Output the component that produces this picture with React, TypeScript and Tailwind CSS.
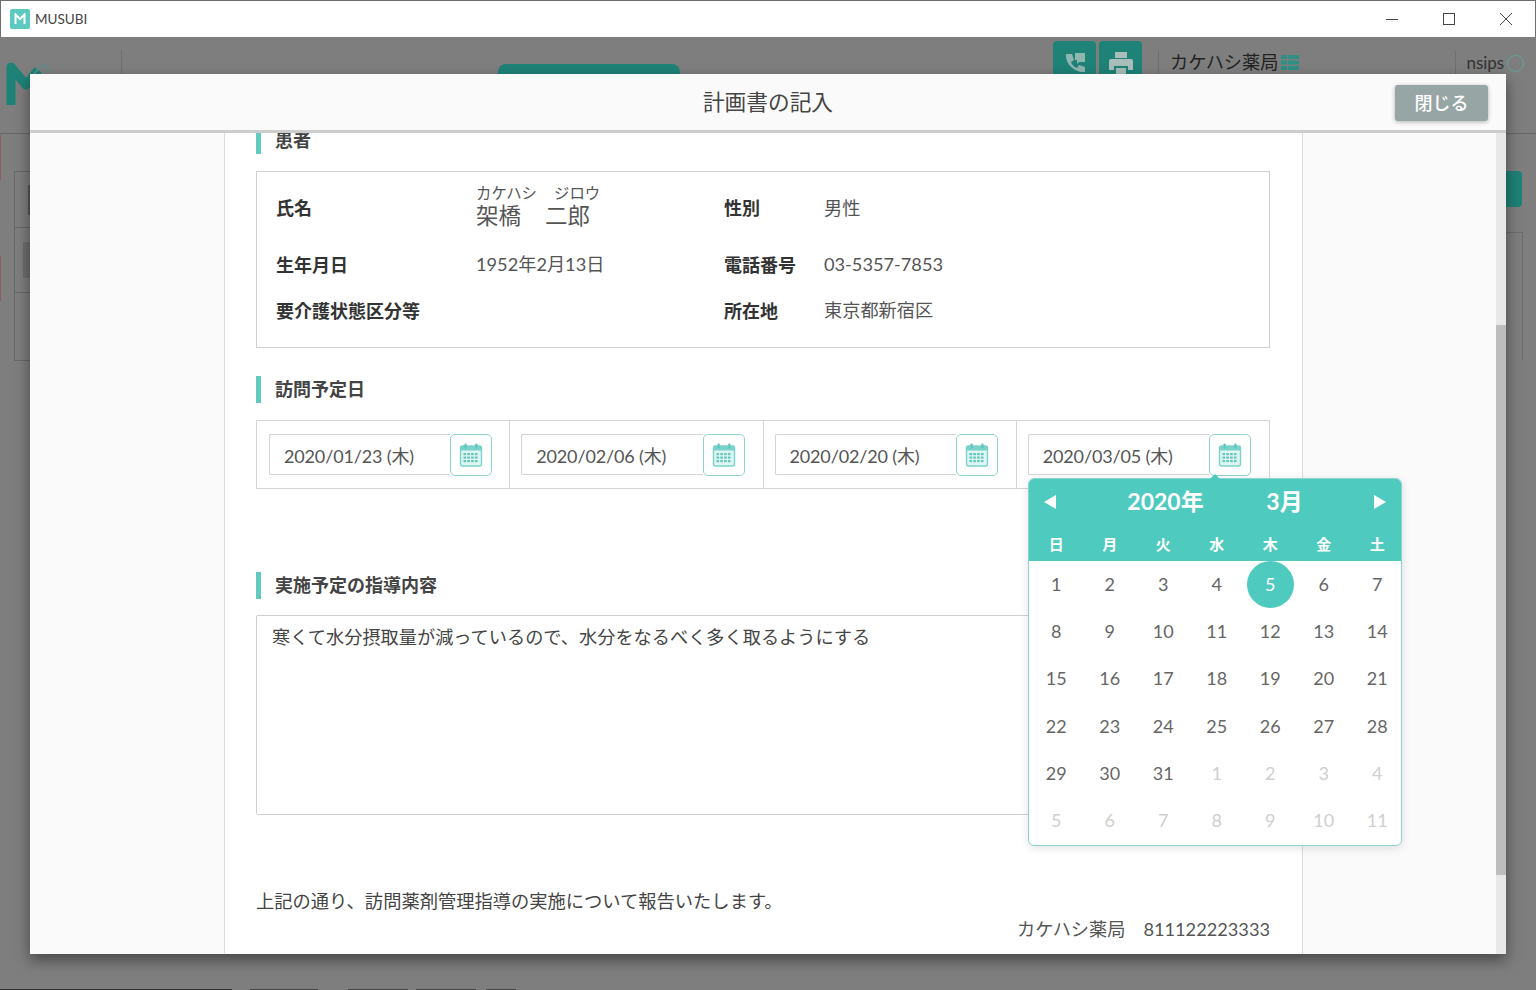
import React from "react";

const FONT = "font-['Lato','Noto_Sans_CJK_JP',sans-serif]";

function CalIcon() {
  return (
    <svg width="24" height="26" viewBox="0 0 24 26" fill="none">
      <rect x="1.5" y="4" width="21" height="20" rx="2" fill="#dff5f2" stroke="#79d3ca" strokeWidth="1.4" />
      <rect x="1.5" y="4" width="21" height="4.5" fill="#79d3ca" />
      <rect x="5.5" y="1.5" width="2.2" height="5" rx="1" fill="#5fc4ba" />
      <rect x="16.3" y="1.5" width="2.2" height="5" rx="1" fill="#5fc4ba" />
      {[11, 14.5, 18].map((y) =>
        [4.5, 8.3, 12.1, 15.9].map((x) => (
          <rect key={`${x}-${y}`} x={x} y={y} width="2.6" height="2.2" fill="#62c7bd" />
        ))
      )}
    </svg>
  );
}

function Heading({ children, className = "" }: { children: React.ReactNode; className?: string }) {
  return (
    <div className={`flex h-[27px] items-center border-l-[5px] border-[#62c9bf] pl-[14px] text-[18px] font-bold text-[#444] ${className}`}>
      {children}
    </div>
  );
}

function DateField({ value, first }: { value: string; first?: boolean }) {
  return (
    <div className={`flex flex-1 items-center ${first ? "pl-[12px] pr-[17px]" : "border-l border-[#d4d4d4] pl-[11px] pr-[18px]"}`}>
      <div className="flex h-[41px] flex-1 items-center rounded-l-[2px] border border-r-0 border-[#d4d4d4] pl-[14px] pt-[3px] text-[18px] tracking-[-0.15px] text-[#555]">
        {value}
      </div>
      <div className="flex h-[42px] w-[42px] items-center justify-center rounded-[5px] border border-[#8fd5ce] bg-white">
        <CalIcon />
      </div>
    </div>
  );
}

function PatientLabel({ children }: { children: React.ReactNode }) {
  return <div className="text-[18px] font-bold text-[#333]">{children}</div>;
}

function PatientValue({ children }: { children: React.ReactNode }) {
  return <div className="text-[18.2px] text-[#555]">{children}</div>;
}

const WEEK = ["日", "月", "火", "水", "木", "金", "土"];
const DAYS: { d: number; muted?: boolean }[] = [
  ...Array.from({ length: 31 }, (_, i) => ({ d: i + 1 })),
  ...[1, 2, 3, 4, 5, 6, 7, 8, 9, 10, 11].map((d) => ({ d, muted: true })),
];

function Calendar() {
  return (
    <div className="absolute left-[803px] top-[345px] w-[374px] rounded-[6px] border border-[#8bd6cf] bg-white shadow-[0_2px_10px_rgba(0,0,0,0.12)]">
      <div className="absolute left-[181px] top-[-5px] h-0 w-0 border-x-[5px] border-b-[5px] border-x-transparent border-b-[#4fcabf]" />
      <div className="rounded-t-[5px] bg-[#4fcabf] text-white">
        <div className="flex h-[45px] items-center justify-between px-[14px]">
          <svg width="14" height="16" viewBox="0 0 14 16"><path d="M13 1v14L1 8z" fill="#fff" /></svg>
          <div className="flex pl-[20px] text-[23px] font-bold">
            <span className="w-[119px] text-center">2020年</span>
            <span className="w-[119px] text-center">3月</span>
          </div>
          <svg width="14" height="16" viewBox="0 0 14 16"><path d="M1 1v14l12-7z" fill="#fff" /></svg>
        </div>
        <div className="grid h-[37px] grid-cols-[repeat(7,53.5px)] items-center pl-[0.5px] pt-[3px] text-center text-[15px] font-bold">
          {WEEK.map((w) => (
            <div key={w}>{w}</div>
          ))}
        </div>
      </div>
      <div className="grid grid-cols-[repeat(7,53.5px)] pb-[1px] pl-[0.5px] text-center text-[18px]">
        {DAYS.map(({ d, muted }, i) => (
          <div key={i} className={`flex h-[47.2px] items-center justify-center ${muted ? "text-[#cfcfcf]" : "text-[#666]"}`}>
            {d === 5 && !muted ? (
              <span className="flex h-[47px] w-[47px] items-center justify-center rounded-full bg-[#4fcabf] text-white">5</span>
            ) : (
              d
            )}
          </div>
        ))}
      </div>
    </div>
  );
}

function Background() {
  return (
    <div className="flex h-[953px] flex-col bg-[#7e7e7e]">
      <div className="flex h-[97px] shrink-0 border-b border-[#666]">
        <div className="flex w-[122px]">
          <svg className="mt-[25px] ml-[6px]" width="44" height="46" viewBox="0 0 44 46" fill="none">
            <path d="M5 43V5l15 18L32 8" stroke="#1f8277" strokeWidth="9" strokeLinejoin="round" />
            <path d="M28 12l6-7c3-3 8-2 8 2v6" stroke="#5d8f89" strokeWidth="1.5" />
          </svg>
          <div className="ml-auto mt-[13px] h-[24px] w-px bg-[#6f6f6f]" />
        </div>
        <div className="ml-[376px] mt-[27px] h-[20px] w-[182px] rounded-t-[8px] bg-[#1f8277]" />
        <div className="ml-[373px] mt-[4px] flex gap-[3px]">
          <div className="flex h-[44px] w-[43px] justify-center rounded-[4px] bg-[#1f8277] pt-[10px]">
            <svg width="24" height="24" viewBox="0 0 24 24"><path d="M3 3h6l2 6-3 2c1 3 3 5 6 6l2-3 6 2v5c-10 1-20-8-19-18z" fill="#8fb5b0" /><path d="M12 2h10v9h-6l-2 2V9h-2z" fill="#8fb5b0" /></svg>
          </div>
          <div className="flex h-[44px] w-[43px] justify-center rounded-[4px] bg-[#1f8277] pt-[10px]">
            <svg width="26" height="24" viewBox="0 0 26 24"><path d="M7 1h12v6H7zM3 8h20a2 2 0 0 1 2 2v9h-5v-4H6v4H1v-9a2 2 0 0 1 2-2zM8 17h10v6H8z" fill="#a9bdba" /></svg>
          </div>
        </div>
        <div className="ml-[16px] mt-[14px] flex h-[24px] items-center gap-[3px] border-l border-[#6f6f6f] pl-[11px] text-[18.2px] text-[#222]">
          カケハシ薬局
          <svg className="-mt-[2px]" width="18" height="15" viewBox="0 0 18 15">
            <path d="M0 0h18v4H0zM0 5.5h18v4H0zM0 11h18v4H0z" fill="#2f9085" />
            <path d="M6 0h1v15H6z" fill="#7e7e7e" />
          </svg>
        </div>
        <div className="ml-[156px] mt-[14px] flex h-[24px] items-center border-l border-[#6f6f6f] pl-[10px] text-[17px] text-[#333]">
          nsips
          <div className="ml-[3px] h-[17px] w-[17px] rounded-full border-[1.5px] border-[#5fa59c]" />
        </div>
      </div>
      <div className="flex min-h-0 flex-1 justify-between pl-[14px] pt-[37px]">
        <div className="h-[190px] w-[40px] border border-[#686868]">
          <div className="h-[56px] border-b border-[#686868] pl-[13px] pt-[13px]">
            <div className="h-[30px] w-[3px] bg-[#555]" />
          </div>
          <div className="h-[65px] border-b border-[#686868] pl-[8px] pt-[14px]">
            <div className="h-[36px] w-[8px] bg-[#6f6f6f]" />
          </div>
        </div>
        <div className="flex w-[30px] flex-col">
          <div className="h-[36px] w-[16px] rounded-r-[4px] bg-[#1f8277]" />
          <div className="mt-[25px] h-[128px] w-[17px] border-r border-t border-[#6c6c6c]" />
        </div>
      </div>
      <div className="flex h-px shrink-0">
        <div className="w-[232px] bg-[#333]" />
        <div className="ml-[18px] w-[68px] bg-[#444]" />
        <div className="ml-[30px] w-[60px] bg-[#444]" />
        <div className="ml-[8px] w-[60px] bg-[#444]" />
        <div className="ml-[10px] w-[30px] bg-[#444]" />
      </div>
    </div>
  );
}

export default function App() {
  return (
    <div className={`relative h-[990px] w-[1536px] overflow-hidden bg-[#7e7e7e] ${FONT}`}>
      <div className="flex h-[37px] items-center border border-b-0 border-[#6e6e6e] bg-white pl-[9px]">
        <div className="flex h-[20px] w-[20px] items-center justify-center rounded-[2px] bg-[#5ccabf]">
          <svg width="12" height="12" viewBox="0 0 12 12"><path d="M1.5 11V1.5L6 6l4.5-4.5V11" fill="none" stroke="#fff" strokeWidth="2" /></svg>
        </div>
        <span className="ml-[5px] text-[13.5px] text-[#444]">MUSUBI</span>
        <div className="ml-auto flex items-center text-[#333]">
          <svg className="mr-[45px]" width="12" height="12" viewBox="0 0 12 12"><path d="M0 6.5h12" stroke="#444" /></svg>
          <svg className="mr-[45px]" width="12" height="12" viewBox="0 0 12 12"><rect x="0.5" y="0.5" width="11" height="11" fill="none" stroke="#444" /></svg>
          <svg className="mr-[23px]" width="12" height="12" viewBox="0 0 12 12"><path d="M0 0l12 12M12 0L0 12" stroke="#444" /></svg>
        </div>
      </div>
      <Background />
      <div className="absolute left-0 top-[135px] h-[45px] w-px bg-[#8a5f5f]" />
      <div className="absolute left-0 top-[256px] h-[45px] w-px bg-[#8a5f5f]" />

      <div className="absolute left-[30px] top-[74px] flex h-[880px] w-[1476px] flex-col bg-[#fafafa] shadow-[0_6px_14px_rgba(0,0,0,0.45)]">
        <div className="relative z-10 flex h-[59px] shrink-0 items-center justify-center border-b-[3px] border-[#cdcdcd] bg-[#fafafa] text-[21.7px] text-[#444]">
          計画書の記入
          <div className="absolute right-[18px] top-[11px] flex h-[36px] w-[93px] items-center justify-center rounded-[3px] bg-[#97a5a4] text-[18px] font-medium text-white shadow-[0_1px_4px_rgba(0,0,0,0.3)]">
            閉じる
          </div>
        </div>
        <div className="flex min-h-0 flex-1">
          <div className="relative ml-[194px] w-[1079px] border-x border-[#dcdcdc] bg-white pl-[31px] pr-[32px]">
            <div className="-mt-[6px] flex flex-col">
              <Heading>患者</Heading>
              <div className="mt-[17px] h-[177px] border border-[#cfcfcf] px-[19px]">
                <div className="flex h-[73px] items-center">
                  <div className="w-[200px]"><PatientLabel>氏名</PatientLabel></div>
                  <div className="-mt-[5px] w-[248px]">
                    <div className="flex text-[15.4px] leading-[19px] text-[#555]">
                      <span className="w-[78px]">カケハシ</span>
                      <span>ジロウ</span>
                    </div>
                    <div className="flex text-[22.5px] leading-[26px] text-[#555]">
                      <span className="w-[69px]">架橋</span>
                      <span>二郎</span>
                    </div>
                  </div>
                  <div className="w-[100px]"><PatientLabel>性別</PatientLabel></div>
                  <PatientValue>男性</PatientValue>
                </div>
                <div className="flex h-[40px] items-center">
                  <div className="w-[200px]"><PatientLabel>生年月日</PatientLabel></div>
                  <div className="w-[248px]"><PatientValue>1952年2月13日</PatientValue></div>
                  <div className="w-[100px]"><PatientLabel>電話番号</PatientLabel></div>
                  <PatientValue>03-5357-7853</PatientValue>
                </div>
                <div className="flex h-[52px] items-center">
                  <div className="w-[448px]"><PatientLabel>要介護状態区分等</PatientLabel></div>
                  <div className="w-[100px]"><PatientLabel>所在地</PatientLabel></div>
                  <PatientValue>東京都新宿区</PatientValue>
                </div>
              </div>
              <Heading className="mt-[28px]">訪問予定日</Heading>
              <div className="mt-[17px] flex h-[69px] border border-[#d4d4d4]">
                <DateField first value="2020/01/23 (木)" />
                <DateField value="2020/02/06 (木)" />
                <DateField value="2020/02/20 (木)" />
                <DateField value="2020/03/05 (木)" />
              </div>
              <Heading className="mt-[83px]">実施予定の指導内容</Heading>
              <div className="mt-[16px] h-[200px] rounded-[2px] border border-[#cfcfcf] px-[15px] pt-[9px] text-[18.2px] leading-[24px] text-[#444]">
                寒くて水分摂取量が減っているので、水分をなるべく多く取るようにする
              </div>
              <div className="mt-[74px] text-[18.28px] leading-[24px] text-[#444]">
                上記の通り、訪問薬剤管理指導の実施について報告いたします。
              </div>
              <div className="mt-[4px] text-right text-[18.2px] leading-[24px] text-[#555]">
                カケハシ薬局<span className="ml-[18px]">811122223333</span>
              </div>
            </div>
            <Calendar />
          </div>
          <div className="ml-auto w-[10px] bg-[#e8e8e8] pt-[192px]">
            <div className="h-[550px] bg-[#bdbdbd]" />
          </div>
        </div>
      </div>
    </div>
  );
}
